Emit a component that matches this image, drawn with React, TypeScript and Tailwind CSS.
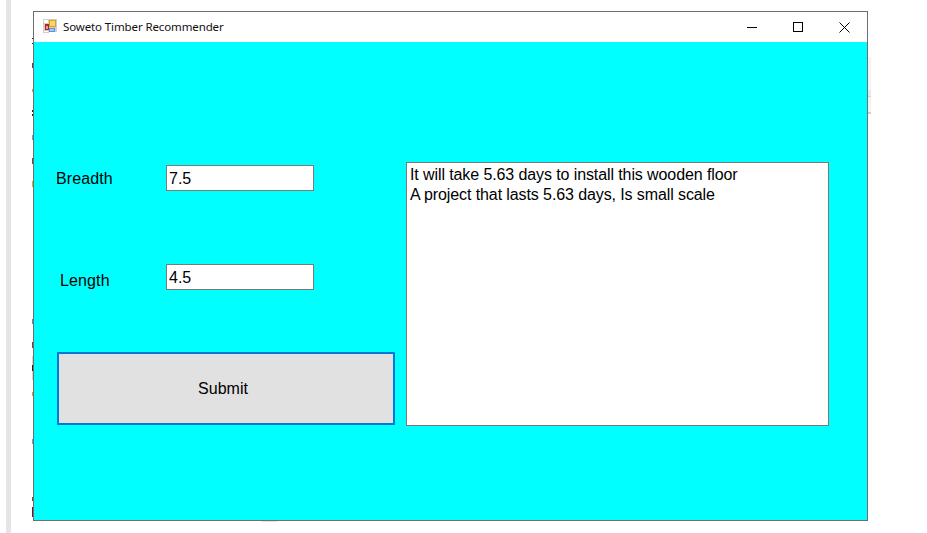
// bits of the window behind, sticking out 1px left of the form
const ticks = [
  { y: 38, h: 1, c: "#222222" },
  { y: 43, h: 1, c: "#222222" },
  { y: 63, h: 5, c: "#5a3a80" },
  { y: 89, h: 3, c: "#e09a30" },
  { y: 110, h: 2, c: "#222222" },
  { y: 114, h: 2, c: "#222222" },
  { y: 135, h: 5, c: "#5aa0f0" },
  { y: 158, h: 6, c: "#6a4a60" },
  { y: 181, h: 6, c: "#c9b030" },
  { y: 319, h: 5, c: "#4a90d8" },
  { y: 342, h: 6, c: "#7a3a50" },
  { y: 356, h: 9, c: "#d5d5d5" },
  { y: 365, h: 6, c: "#222222" },
  { y: 371, h: 9, c: "#d5d5d5" },
  { y: 392, h: 4, c: "#e09a30" },
  { y: 439, h: 5, c: "#5aa0f0" },
  { y: 497, h: 4, c: "#4a6040" },
  { y: 507, h: 10, c: "#7a0a4a" },
];

function AppIcon() {
  return (
    <svg width="14" height="14" viewBox="0 0 14 14" className="mt-[-2px] shrink-0">
      <rect x="0" y="0" width="14" height="14" fill="#cfcfcf" />
      <rect x="1" y="1" width="4" height="3" fill="#ffffff" />
      <rect x="1" y="12" width="4" height="1" fill="#ffffff" />
      <rect x="6" y="13" width="8" height="1" fill="#ffffff" />
      <rect x="2" y="5" width="4" height="6" fill="#b8201c" />
      <rect x="3" y="7" width="2" height="3" fill="#f09a90" />
      <rect x="6" y="1" width="7" height="7" fill="#d9a02c" />
      <rect x="7" y="2" width="5" height="5" fill="#fbd860" />
      <rect x="6" y="9" width="6" height="4" fill="#5b93e0" />
      <rect x="7" y="10" width="4" height="2" fill="#a8c8f0" />
    </svg>
  );
}

export default function App() {
  return (
    <div className="flex h-[533px] w-[927px] overflow-hidden bg-white font-['Liberation_Sans',Arial,sans-serif] text-base text-black">
      <div className="ml-[6px] h-full w-[5px] bg-[#e5e5e5]" />

      <div className="ml-[21px] flex w-px flex-col">
        {ticks.map((t, i) => (
          <div
            key={i}
            style={{
              height: t.h,
              marginTop: t.y - (i ? ticks[i - 1].y + ticks[i - 1].h : 0),
              background: t.c,
            }}
          />
        ))}
      </div>

      <div className="mt-[11px] flex flex-col">
        <div className="h-[510px] w-[835px] border border-[#6e6e6e]">
          <div className="flex h-[30px] items-center bg-white pl-[9px]">
            <AppIcon />
            <span className="ml-[6px] font-['Noto_Sans',sans-serif] text-[11.5px] tracking-[-0.12px] text-[#111111]">
              Soweto Timber Recommender
            </span>
            <div className="ml-auto flex h-full">
              <div className="flex w-[46px] items-center justify-center">
                <div className="h-px w-[10px] bg-black" />
              </div>
              <div className="flex w-[46px] items-center justify-center">
                <div className="h-[10px] w-[10px] border border-black" />
              </div>
              <div className="flex w-[46px] items-center justify-center">
                <svg width="11" height="11" viewBox="0 0 11 11" stroke="#000000" strokeWidth="1">
                  <path d="M0.5 0.5 10.5 10.5M10.5 0.5 0.5 10.5" />
                </svg>
              </div>
            </div>
          </div>

          <div className="flex h-[478px] bg-[#00ffff] pl-[23px] pt-[120px]">
            <div className="w-[338px] pt-[3px]">
              <div className="flex h-[26px] items-center">
                <span className="mt-[2px] w-[109px] -indent-px tracking-[0.12px]">Breadth</span>
                <div className="h-[26px] w-[148px] border border-[#7a7a7a] bg-white pl-[2px] leading-[26px]">7.5</div>
              </div>
              <div className="mt-[73px] flex h-[26px] items-center">
                <span className="mt-[8px] w-[109px] pl-[3px] tracking-[0.12px]">Length</span>
                <div className="h-[26px] w-[148px] border border-[#7a7a7a] bg-white pl-[2px] leading-[26px]">4.5</div>
              </div>
              <button className="mt-[62px] h-[73px] w-[338px] border-2 border-[#0078d7] bg-[#e1e1e1] pr-[6px] text-base text-black">
                Submit
              </button>
            </div>

            <div className="ml-[11px] h-[264px] w-[423px] border border-[#7a7a7a] bg-white px-[3px] pt-[2px] leading-[20px] tracking-[-0.1px]">
              <p>It will take 5.63 days to install this wooden floor</p>
              <p>A project that lasts 5.63 days, Is small scale</p>
            </div>
          </div>
        </div>
        <div className="ml-[229px] h-px w-[15px] bg-[#e2e2e2]" />
      </div>

      <div className="mt-[57px] flex h-[57px] w-[3px] flex-col bg-[#f3f3f3]">
        <div className="mt-[33px] h-[7px] border-b border-[#c5d5ea] bg-[#e4e8f0]" />
        <div className="mt-[15px] h-[2px] bg-[#d0d0d0]" />
      </div>
    </div>
  );
}
